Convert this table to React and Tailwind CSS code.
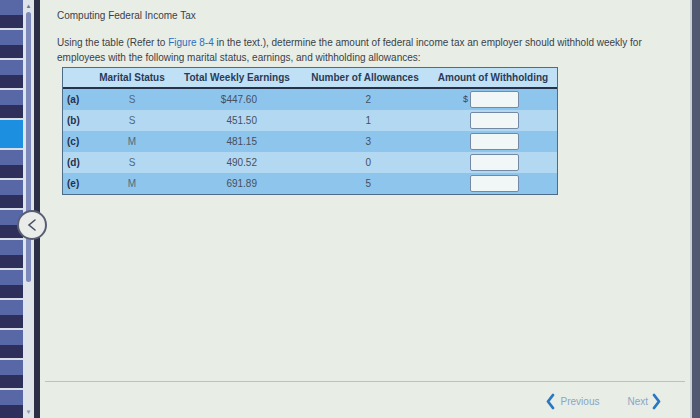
import React from "react";

const rows = [
  { label: "(a)", status: "S", earnings: "$447.60", allowances: "2", dollar: true },
  { label: "(b)", status: "S", earnings: "451.50", allowances: "1" },
  { label: "(c)", status: "M", earnings: "481.15", allowances: "3" },
  { label: "(d)", status: "S", earnings: "490.52", allowances: "0" },
  { label: "(e)", status: "M", earnings: "691.89", allowances: "5" },
];

const navItems = Array.from({ length: 14 }, (_, i) => i);

function Sidebar() {
  return (
    <div className="flex h-full shrink-0">
      {/* chapter list */}
      <div className="flex w-[23px] flex-col gap-[2px] bg-[#d9dde6]">
        {navItems.map((i) =>
          i === 4 ? (
            <div key={i} className="h-[28px] bg-[#1d8fe0]" />
          ) : (
            <div key={i} className="flex h-[28px] flex-col">
              <div className="h-[15px] bg-[#5867a6]" />
              <div className="h-[13px] bg-[#2f2f5c]" />
            </div>
          )
        )}
      </div>
      {/* scroll bar */}
      <div className="flex w-[11px] flex-col items-center bg-[#dfe3ea] py-[3px]">
        <span className="text-[6px] leading-[6px] text-[#6b7594]">▲</span>
        <div className="mt-[3px] h-[270px] w-[5px] rounded-full bg-[#7d88bb]" />
        <div className="flex-1" />
        <span className="text-[6px] leading-[6px] text-[#8a93ac]">▼</span>
      </div>
      <div className="w-[6px] bg-[#2b2e44]" />
    </div>
  );
}

function Chevron({ dir }) {
  return (
    <svg width="9" height="17" viewBox="0 0 9 17">
      <path
        d={dir === "left" ? "M7 2 L2 8.5 L7 15" : "M2 2 L7 8.5 L2 15"}
        fill="none"
        stroke="#2a78c2"
        strokeWidth="2.8"
        strokeLinecap="round"
        strokeLinejoin="round"
      />
    </svg>
  );
}

export default function App() {
  return (
    <div className="relative flex h-[418px] w-[700px] overflow-hidden bg-[#e8ede6] font-['Liberation_Sans',Arial,sans-serif]">
      <Sidebar />

      {/* Back button over the sidebar edge */}
      <div className="absolute left-[17px] top-[210px] flex h-[30px] w-[30px] items-center justify-center rounded-full border-2 border-[#5a5e74] bg-[#e9ece8]">
        <svg width="12" height="14" viewBox="0 0 12 14">
          <path d="M9 2 L3 7 L9 12" fill="none" stroke="#4a4e66" strokeWidth="1.6" strokeLinecap="round" />
        </svg>
      </div>

      <main className="flex flex-1 flex-col border-r-2 border-[#c9cfd2]">
        <div className="flex-1 pl-[17px] pr-4 pt-[9px]">
          <h1 className="text-[10px] leading-[14px] text-[#3a3f48]">Computing Federal Income Tax</h1>

          <p className="mt-[12px] text-[10px] leading-[15px] text-[#3a3f48]">
            Using the table (Refer to <span className="text-[#2a6fc0]">Figure 8-4</span> in the text.), determine the amount of federal income tax an employer should withhold weekly for
            <br />
            employees with the following marital status, earnings, and withholding allowances:
          </p>

          {/* table */}
          <div className="ml-[5px] mt-[2px] w-[496px] border border-[#4e6b88] text-[10px]">
            <div className="grid h-[21px] grid-cols-[28px_82px_128px_128px_128px] items-center border-b-2 border-[#26324a] bg-[#bfe0f5] font-bold text-[#2b3a55]">
              <div />
              <div className="text-center">Marital Status</div>
              <div className="text-center">Total Weekly Earnings</div>
              <div className="text-center">Number of Allowances</div>
              <div className="text-center">Amount of Withholding</div>
            </div>
            {rows.map((r, i) => (
              <div
                key={r.label}
                className={`grid h-[21px] grid-cols-[28px_82px_128px_128px_128px] items-center ${
                  i % 2 === 0 ? "bg-[#8ec5ec]" : "bg-[#b3d9f2]"
                }`}
              >
                <div className="pl-[4px] font-bold text-[#28304a]">{r.label}</div>
                <div className="text-center text-[#4f6a80]">{r.status}</div>
                <div className="pr-[44px] text-right text-[#46505e]">{r.earnings}</div>
                <div className="pr-[58px] text-right text-[#46505e]">{r.allowances}</div>
                <div className="flex items-center pl-[34px]">
                  <span className="w-[7px] text-[9px] text-[#3c4656]">{r.dollar ? "$" : ""}</span>
                  <input
                    className="h-[17px] w-[49px] rounded-[2px] border border-[#7489a6] bg-[#f1f6f6]"
                    readOnly
                  />
                </div>
              </div>
            ))}
          </div>
        </div>

        {/* footer nav */}
        <div className="mx-[5px] h-[37px] border-t border-[#b7c2c9]">
          <div className="flex items-center justify-end gap-[28px] pr-[24px] pt-[11px] text-[10px] text-[#8aa6c6]">
            <div className="flex items-center gap-[6px]">
              <Chevron dir="left" />
              <span>Previous</span>
            </div>
            <div className="flex items-center gap-[4px]">
              <span>Next</span>
              <Chevron dir="right" />
            </div>
          </div>
        </div>
      </main>

      <div className="w-[8px] bg-[#535871]" />
    </div>
  );
}
